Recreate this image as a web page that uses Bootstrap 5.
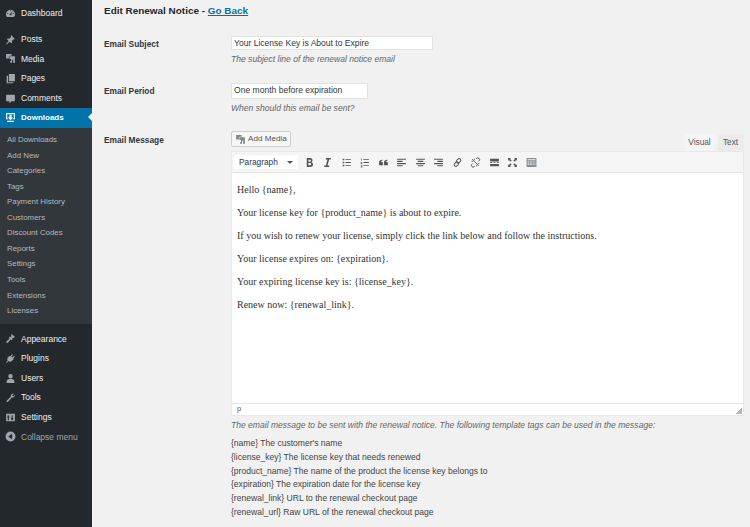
<!DOCTYPE html>
<html lang="en">
<head>
<meta charset="utf-8">
<title>Edit Renewal Notice</title>
<link href="https://cdn.jsdelivr.net/npm/bootstrap@5.3.0/dist/css/bootstrap.min.css" rel="stylesheet">
<style>
html,body{height:527px;overflow:hidden}
body{background:#f1f1f1;font-family:"Liberation Sans",Arial,sans-serif;font-size:8.5px;color:#444}
.wp-shell{height:527px}
.wp-side{width:92px;background:#23282d;flex:none;padding-top:3.5px}
.wp-item{height:19.6px;color:#eee;font-size:8.5px;padding-left:5px;gap:5px;position:relative}
.wp-item svg{width:11px;height:11px;fill:#a0a5aa;flex:none}
.wp-gap{margin-top:6.5px}
.wp-cur{background:#0073aa;color:#fff;font-weight:700;font-size:8px}
.wp-cur svg{fill:#fff}
.wp-cur::after{content:"";position:absolute;right:0;top:5.5px;border:4px solid transparent;border-right-color:#f1f1f1;border-left:0}
.wp-sub{background:#32373c;padding:4.5px 0 5px;margin-bottom:5.5px}
.wp-sub div{height:15.55px;line-height:15.55px;padding-left:7px;color:#b4b9be;font-size:7.9px}
.wp-mut{color:#a0a5aa}
.wp-main{padding:0 6.5px 0 12px;min-width:0;flex:1}
.wp-title{font-size:9.95px;font-weight:700;color:#23282d;line-height:14px;padding-top:4px;margin-bottom:18px}
.wp-title a{color:#0073aa;font-weight:700}
.wp-lab{width:127px;flex:none;font-weight:700;color:#32373c;font-size:8.35px;padding-top:1.8px}
.wp-lab.wp-lab3{padding-top:3.3px}
.wp-in{height:14px;border:1px solid #e2e2e2;background:#fff;color:#32373c;font-size:8.55px;line-height:12px;padding:0 2px;border-radius:0;display:block}
.wp-w1{width:202px}
.wp-w2{width:137px;height:15.5px;line-height:13.5px}
.wp-desc{font-style:italic;color:#666;font-size:8.55px;line-height:12px;margin-top:3px}
.wp-w2 + .wp-desc{margin-top:3.5px}
.wp-row1{margin-bottom:18px}
.wp-row2{margin-bottom:17px}
.wp-fld{flex:1;min-width:0}
.wp-top{height:20px}
.wp-mediabtn{height:16px;width:60px;border:1px solid #ccc;background:#f7f7f7;color:#555;font-size:8.1px;border-radius:2px;gap:2px;padding:0 3px;white-space:nowrap;align-self:flex-start}
.wp-mediabtn svg{width:11px;height:11px;fill:#82878c;flex:none}
.wp-tab{height:17px;background:#ebebeb;color:#555;font-size:8.3px;width:26px;text-align:center;line-height:17px}
.wp-tab.wp-on{background:#f5f5f5;margin-right:3px;width:30px}
.wp-ed{border:1px solid #e8e8e8;background:#fff}
.wp-bar{height:21px;background:#f5f5f5;border-bottom:1px solid #e5e5e5;padding-left:2px}
.wp-sel{width:64px;height:14px;background:#fff;color:#32373c;font-size:8.3px;padding:0 5px;margin-right:2px}
.wp-sel i{border:3px solid transparent;border-top-color:#555;border-bottom:0;width:0;height:0}
.wp-tool{width:18.5px;height:14px}
.wp-tool svg{width:11px;height:11px;fill:#555}
.wp-tool svg.wp-line{fill:none;stroke:#555;stroke-width:1.8}
.wp-tool svg.wp-sink{fill:#8a8f94}
.wp-body{height:229.5px;padding:5px 5px;font-family:"Liberation Serif","Times New Roman",serif;font-size:10px;color:#333}
.wp-body p{margin:0;height:23px;line-height:23px}
.wp-stat{height:12px;border-top:1px solid #e5e5e5;padding:0 5px;font-size:7.6px;color:#555;line-height:9px;position:relative}
.wp-grip{position:absolute;right:1px;bottom:1px;width:6px;height:6px;fill:#b4b9be}
.wp-tags{margin-top:6.5px;font-size:8.55px;line-height:13.8px;color:#444}
</style>
</head>
<body>
<div class="d-flex wp-shell">
<nav class="wp-side">
<div class="wp-item d-flex align-items-center"><svg viewBox="0 0 20 20"><path d="M3.8 16.5A8 8 0 1 1 16.200 16.500L3.800 16.500zM10 4a1 1 0 1 0 0 2 1 1 0 0 0 0-2zM5 9a1 1 0 1 0 0 2 1 1 0 0 0 0-2zm10 0a1 1 0 1 0 0 2 1 1 0 0 0 0-2zm-1-3.500L10.500 10a1.700 1.700 0 1 0 1.200 1z"/></svg>Dashboard</div>
<div class="wp-item d-flex align-items-center wp-gap"><svg viewBox="0 0 20 20"><path d="M11 2l7 7-1.500 1-1-.5-3 3 .5 3-1.500 1.500-3-3L3 19l-1-1 4.500-5.500-3-3L5 8l3 .5 3-3-.5-1z"/></svg>Posts</div>
<div class="wp-item d-flex align-items-center"><svg viewBox="0 0 20 20"><path d="M2 2h10v3H9a2 2 0 0 0-2 2v3H2zM8 6h10v12h-3v-6l-2 .5V16a2 2 0 1 1-2-2v-3H8z"/></svg>Media</div>
<div class="wp-item d-flex align-items-center"><svg viewBox="0 0 20 20"><path d="M7 2h11v13H7zM3 5h2.500v12H15v1.500H3z"/></svg>Pages</div>
<div class="wp-item d-flex align-items-center"><svg viewBox="0 0 20 20"><path d="M3 3h14a1 1 0 0 1 1 1v10a1 1 0 0 1-1 1h-5l-4 4v-4H3a1 1 0 0 1-1-1V4a1 1 0 0 1 1-1z"/></svg>Comments</div>
<div class="wp-item d-flex align-items-center wp-cur"><svg viewBox="0 0 20 20"><path d="M2 2h16v11h-4l2-2V4H4v7l2 2H2zM8 5h4v5h3l-5 5-5-5h3zM4 16h12v2H4z"/></svg>Downloads</div>
<div class="wp-sub">
<div>All Downloads</div><div>Add New</div><div>Categories</div><div>Tags</div><div>Payment History</div><div>Customers</div><div>Discount Codes</div><div>Reports</div><div>Settings</div><div>Tools</div><div>Extensions</div><div>Licenses</div>
</div>
<div class="wp-item d-flex align-items-center"><svg viewBox="0 0 20 20"><path d="M12 2l6 5-2 2-1-1-2 2 1 1-2 2-1.500-1.500L5 18l-3-1 .5-1.500 6-5.500L7 8.500l2-2 1 1 2-2-1-1z"/></svg>Appearance</div>
<div class="wp-item d-flex align-items-center"><svg viewBox="0 0 20 20"><path d="M13 2l1.500 1.500-3 3L13.500 8l3-3L18 6.500 15 10l1 1-4 4c-2 1-4 1-5.500-.5L3 18l-1-1 3-3.500C4 12 4 10 5 8l4-3 1 1z"/></svg>Plugins</div>
<div class="wp-item d-flex align-items-center"><svg viewBox="0 0 20 20"><path d="M10 2a4 4 0 0 1 4 4 4 4 0 0 1-4 4 4 4 0 0 1-4-4 4 4 0 0 1 4-4zM3 18v-3c0-3 3-4 7-4s7 1 7 4v3z"/></svg>Users</div>
<div class="wp-item d-flex align-items-center"><svg viewBox="0 0 20 20"><path d="M18 5c.5 3-2 6-5.500 5L5 18c-1 1-3-1-2-2l7.500-7.500C10 5 13 2 16 3l-3 3 2 2z"/></svg>Tools</div>
<div class="wp-item d-flex align-items-center"><svg viewBox="0 0 20 20"><path fill-rule="evenodd" d="M2 3h16v14H2zM5 6v2H4v2h1v5h2v-5h1V8H7V6zm7 0v5h-1v2h1v2h2v-2h1v-2h-1V6z"/></svg>Settings</div>
<div class="wp-item d-flex align-items-center wp-mut"><svg viewBox="0 0 20 20"><path fill-rule="evenodd" d="M10 1a9 9 0 1 1 0 18 9 9 0 0 1 0-18zm3 4l-7 5 7 5z"/></svg>Collapse menu</div>
</nav>
<main class="wp-main">
<div class="wp-title">Edit Renewal Notice - <a href="#">Go Back</a></div>
<div class="d-flex wp-row1">
<div class="wp-lab">Email Subject</div>
<div class="wp-fld"><span class="wp-in wp-w1">Your License Key is About to Expire</span><div class="wp-desc">The subject line of the renewal notice email</div></div>
</div>
<div class="d-flex wp-row2">
<div class="wp-lab">Email Period</div>
<div class="wp-fld"><span class="wp-in wp-w2">One month before expiration</span><div class="wp-desc">When should this email be sent?</div></div>
</div>
<div class="d-flex">
<div class="wp-lab wp-lab3">Email Message</div>
<div class="wp-fld">
<div class="d-flex justify-content-between align-items-end wp-top">
<div class="d-flex align-items-center wp-mediabtn"><svg viewBox="0 0 20 20"><path d="M2 2h10v3H9a2 2 0 0 0-2 2v3H2zM8 6h10v12h-3v-6l-2 .5V16a2 2 0 1 1-2-2v-3H8z"/></svg>Add Media</div>
<div class="d-flex"><div class="wp-tab wp-on">Visual</div><div class="wp-tab">Text</div></div>
</div>
<div class="wp-ed">
<div class="d-flex align-items-center wp-bar">
<div class="d-flex align-items-center justify-content-between wp-sel">Paragraph<i></i></div>
<div class="wp-tool d-flex align-items-center justify-content-center"><svg viewBox="0 0 20 20"><path d="M5 2h6c3 0 4.500 1.500 4.500 4 0 1.600-1 3-2.500 3.500 2 .5 3.500 2 3.500 4.200 0 2.800-2 4.300-5 4.300H5zm3 3v3.500h2.500c1.200 0 2-.7 2-1.800S11.700 5 10.500 5zm0 6v4h3c1.300 0 2-.8 2-2s-.7-2-2-2z"/></svg></div>
<div class="wp-tool d-flex align-items-center justify-content-center"><svg viewBox="0 0 20 20"><path d="M7 2h9v2.500h-3L10 15.500h3V18H4v-2.500h3L10 4.500H7z"/></svg></div>
<div class="wp-tool d-flex align-items-center justify-content-center"><svg viewBox="0 0 20 20"><path d="M3 3h3v3H3zM8 4h10v1.500H8zM3 8.500h3v3H3zM8 9.300h10v1.500H8zM3 14h3v3H3zM8 14.800h10v1.500H8z"/></svg></div>
<div class="wp-tool d-flex align-items-center justify-content-center"><svg viewBox="0 0 20 20"><path d="M3 3h2v4H4V4H3zM3 9h3v1l-2 2h2v1H3v-1l2-2H3zM3 15h3v4H3v-1h2v-.5H4v-1h1V16H3zM8 4h10v1.500H8zM8 9.300h10v1.500H8zM8 14.800h10v1.500H8z"/></svg></div>
<div class="wp-tool d-flex align-items-center justify-content-center"><svg viewBox="0 0 20 20"><path d="M9 5v1C6.500 6.500 6 8 6 9.500h3V15H2V9.500C2 7 3.500 5 9 5zm9 0v1c-2.500.5-3 2-3 3.500h3V15h-7V9.500C11 7 12.500 5 18 5z"/></svg></div>
<div class="wp-tool d-flex align-items-center justify-content-center"><svg viewBox="0 0 20 20"><path d="M2 3h16v2H2zM2 7h10v2H2zM2 11h16v2H2zM2 15h10v2H2z"/></svg></div>
<div class="wp-tool d-flex align-items-center justify-content-center"><svg viewBox="0 0 20 20"><path d="M2 3h16v2H2zM5 7h10v2H5zM2 11h16v2H2zM5 15h10v2H5z"/></svg></div>
<div class="wp-tool d-flex align-items-center justify-content-center"><svg viewBox="0 0 20 20"><path d="M2 3h16v2H2zM8 7h10v2H8zM2 11h16v2H2zM8 15h10v2H8z"/></svg></div>
<div class="wp-tool d-flex align-items-center justify-content-center"><svg class="wp-line" viewBox="0 0 20 20"><rect x="9" y="2.500" width="6" height="9" rx="3" transform="rotate(45 12 7)"/><rect x="5" y="8.500" width="6" height="9" rx="3" transform="rotate(45 8 13)"/></svg></div>
<div class="wp-tool d-flex align-items-center justify-content-center"><svg class="wp-line" viewBox="0 0 20 20"><path d="M11 3.500l1-1a3 3 0 0 1 4.500 4.500l-1 1M9 16.500l-1 1a3 3 0 0 1-4.500-4.500l1-1M4 4l12 12M3 8h2M8 3v2M17 12h-2M12 17v-2"/></svg></div>
<div class="wp-tool d-flex align-items-center justify-content-center"><svg viewBox="0 0 20 20"><path d="M2 3h16v5H2zM2 9.500h4v1.500H2zM8 9.500h4v1.500H8zM14 9.500h4v1.500h-4zM2 12.500h16V17H2z"/></svg></div>
<div class="wp-tool d-flex align-items-center justify-content-center"><svg viewBox="0 0 20 20"><path d="M2 2h5L5.500 3.500 8.500 6.500 6.500 8.500 3.500 5.500 2 7zM18 2v5l-1.500-1.500-3 3-2-2 3-3L13 2zM2 18v-5l1.500 1.500 3-3 2 2-3 3L7 18zM18 18h-5l1.500-1.500-3-3 2-2 3 3L18 13z"/></svg></div>
<div class="wp-tool d-flex align-items-center justify-content-center"><svg class="wp-sink" viewBox="0 0 20 20"><path fill-rule="evenodd" d="M1 2h18v16H1zM3 4v2h14V4zM3 8v2h3V8zm4.500 0v2h3V8zM12 8v2h2V8zm3.500 0v2H17V8zM3 12v2h3v-2zm4.500 0v2h3v-2zm4.500 0v2h2v-2zm3.500 0v2H17v-2z"/></svg></div>
</div>
<div class="wp-body">
<p>Hello {name},</p>
<p>Your license key for {product_name} is about to expire.</p>
<p>If you wish to renew your license, simply click the link below and follow the instructions.</p>
<p>Your license expires on: {expiration}.</p>
<p>Your expiring license key is: {license_key}.</p>
<p>Renew now: {renewal_link}.</p>
</div>
<div class="wp-stat">p<svg class="wp-grip" viewBox="0 0 6 6"><path d="M5 0h1v6H0V5h1V4h1V3h1V2h1V1h1z"/></svg></div>
</div>
<div class="wp-desc">The email message to be sent with the renewal notice. The following template tags can be used in the message:</div>
<div class="wp-tags">
<div>{name} The customer's name</div>
<div>{license_key} The license key that needs renewed</div>
<div>{product_name} The name of the product the license key belongs to</div>
<div>{expiration} The expiration date for the license key</div>
<div>{renewal_link} URL to the renewal checkout page</div>
<div>{renewal_url} Raw URL of the renewal checkout page</div>
</div>
</div>
</div>
</main>
</div>
<script src="https://cdn.jsdelivr.net/npm/bootstrap@5.3.0/dist/js/bootstrap.bundle.min.js"></script>
</body>
</html>
